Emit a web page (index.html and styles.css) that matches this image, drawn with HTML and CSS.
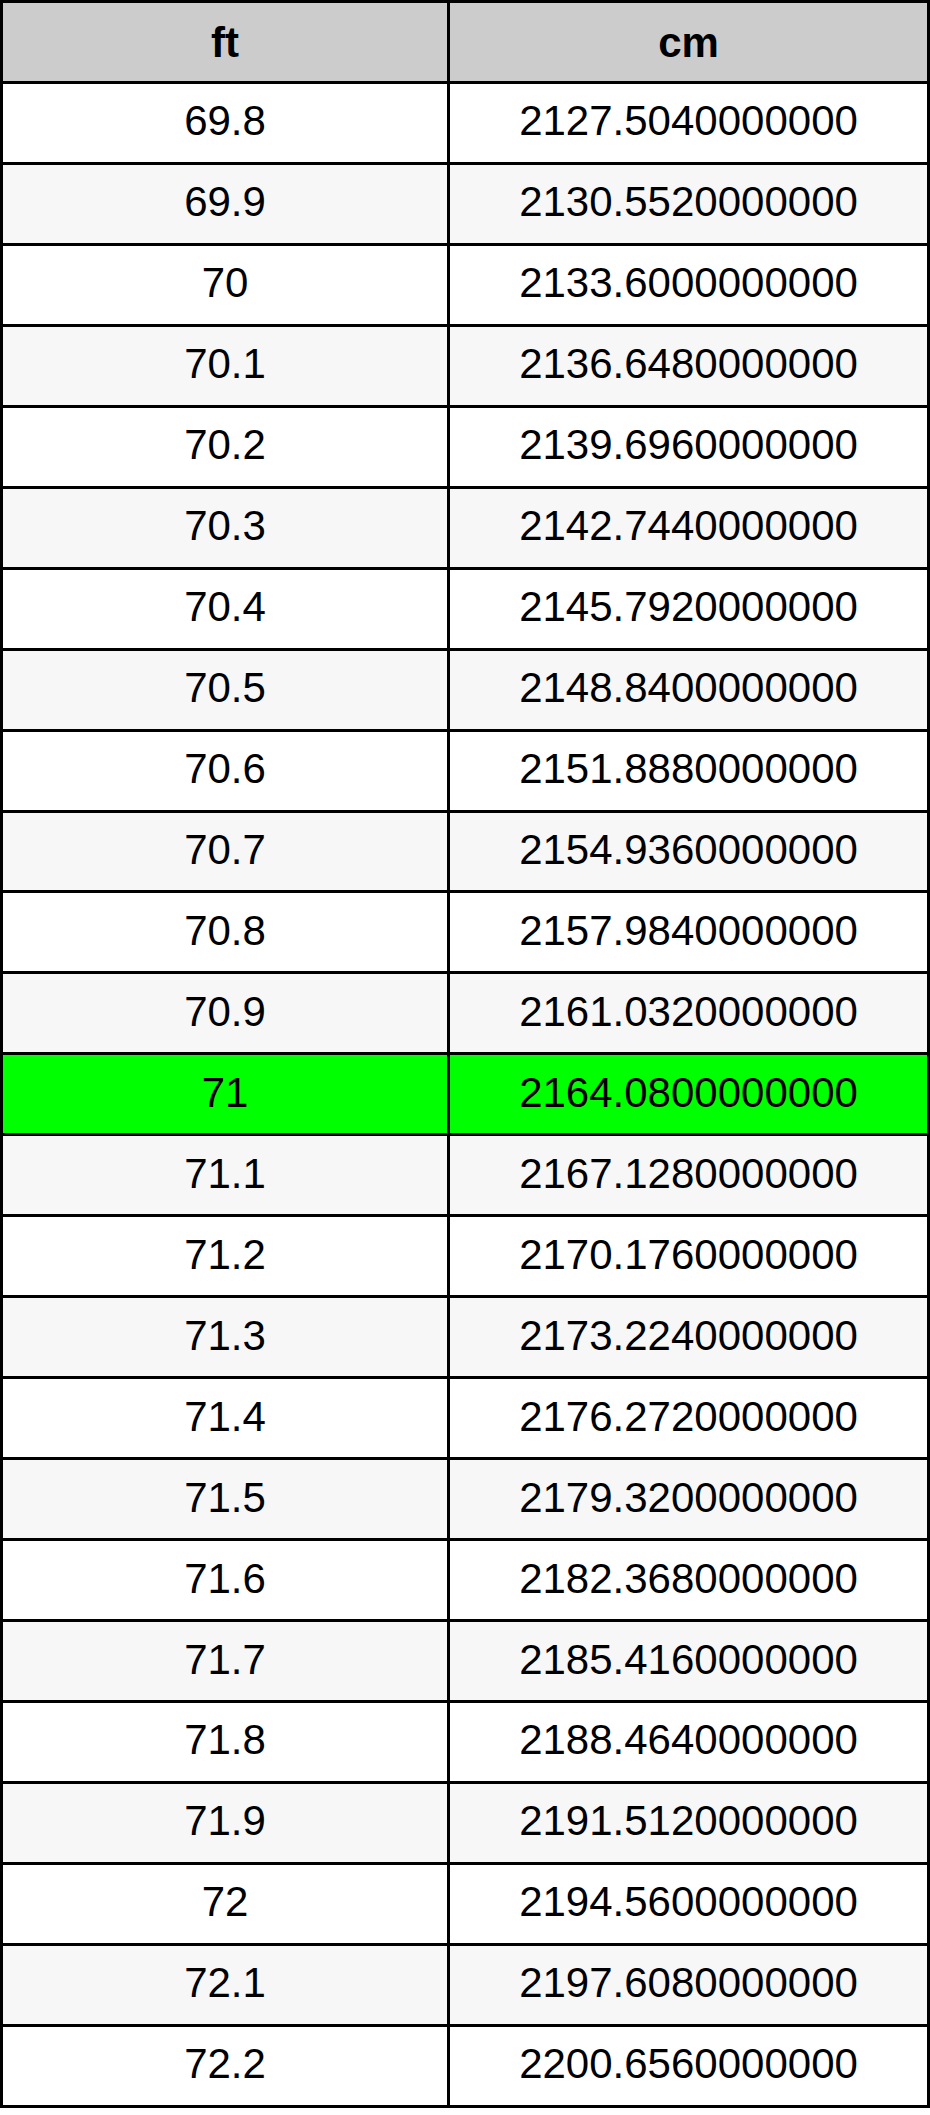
FILE: index.html
```html
<!DOCTYPE html>
<html>
<head>
<meta charset="utf-8">
<link rel="stylesheet" href="styles.css">
</head>
<body>
<div class="table">
  <div class="cell head">ft</div><div class="cell head">cm</div>
  <div class="cell">69.8</div><div class="cell">2127.5040000000</div>
  <div class="cell alt">69.9</div><div class="cell alt">2130.5520000000</div>
  <div class="cell">70</div><div class="cell">2133.6000000000</div>
  <div class="cell alt">70.1</div><div class="cell alt">2136.6480000000</div>
  <div class="cell">70.2</div><div class="cell">2139.6960000000</div>
  <div class="cell alt">70.3</div><div class="cell alt">2142.7440000000</div>
  <div class="cell">70.4</div><div class="cell">2145.7920000000</div>
  <div class="cell alt">70.5</div><div class="cell alt">2148.8400000000</div>
  <div class="cell">70.6</div><div class="cell">2151.8880000000</div>
  <div class="cell alt">70.7</div><div class="cell alt">2154.9360000000</div>
  <div class="cell">70.8</div><div class="cell">2157.9840000000</div>
  <div class="cell alt">70.9</div><div class="cell alt">2161.0320000000</div>
  <div class="cell hi">71</div><div class="cell hi">2164.0800000000</div>
  <div class="cell alt">71.1</div><div class="cell alt">2167.1280000000</div>
  <div class="cell">71.2</div><div class="cell">2170.1760000000</div>
  <div class="cell alt">71.3</div><div class="cell alt">2173.2240000000</div>
  <div class="cell">71.4</div><div class="cell">2176.2720000000</div>
  <div class="cell alt">71.5</div><div class="cell alt">2179.3200000000</div>
  <div class="cell">71.6</div><div class="cell">2182.3680000000</div>
  <div class="cell alt">71.7</div><div class="cell alt">2185.4160000000</div>
  <div class="cell">71.8</div><div class="cell">2188.4640000000</div>
  <div class="cell alt">71.9</div><div class="cell alt">2191.5120000000</div>
  <div class="cell">72</div><div class="cell">2194.5600000000</div>
  <div class="cell alt">72.1</div><div class="cell alt">2197.6080000000</div>
  <div class="cell">72.2</div><div class="cell">2200.6560000000</div>
</div>
</body>
</html>
```
FILE: styles.css
```css
html, body {
  margin: 0;
  padding: 0;
  background: #fff;
}
body {
  font-family: "Liberation Sans", Arial, sans-serif;
  color: #000;
}
.table {
  display: grid;
  grid-template-columns: 444px 477px;
  grid-auto-rows: 77.96px;
  gap: 3px;
  padding: 3px;
  background: #000;
  width: max-content;
}
.cell {
  display: flex;
  align-items: center;
  justify-content: center;
  background: #fff;
  font-size: 42px;
  padding-bottom: 3px;
  box-sizing: border-box;
}
.cell.alt {
  background: #f7f7f7;
}
.cell.hi {
  background: #00ff00;
}
.cell.head {
  background: #cccccc;
  font-weight: bold;
  padding-bottom: 0;
  padding-top: 2px;
}
```
